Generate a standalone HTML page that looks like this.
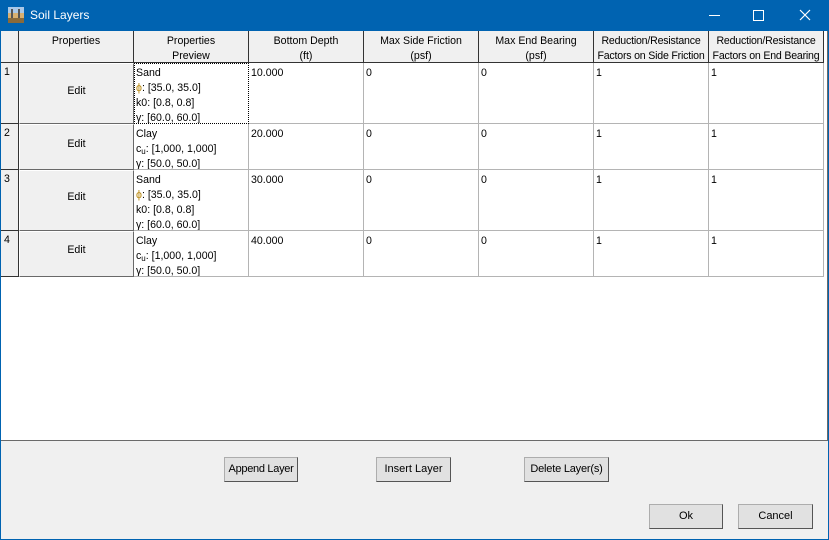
<!DOCTYPE html><html><head><style>
body{margin:0;width:829px;height:540px;overflow:hidden;background:#f0f0f0;font-family:"Liberation Sans",sans-serif;font-size:10.6px;color:#000;position:relative}
.a{position:absolute}
.tb{left:0;top:0;width:829px;height:31px;background:#0063b1;color:#fff}
.grid{left:1px;top:31px;width:826px;height:409px;background:#fff;border-right:1px solid #6a6a6a;border-bottom:1px solid #6a6a6a}
.h{background:#f0f0f0;border-right:1px solid #333;border-bottom:1px solid #333;text-align:center;line-height:15px;box-sizing:border-box;padding-top:3px;white-space:nowrap;overflow:hidden}
.c{border-right:1px solid #b4b4b4;border-bottom:1px solid #b4b4b4;box-sizing:border-box;padding:3px 2px;line-height:15px;white-space:nowrap;overflow:hidden}
.rh{background:#f0f0f0;border-right:1px solid #333;border-bottom:1px solid #333;box-sizing:border-box;padding:3px 3px}
.eb{background:#f0f0f0;border:1px solid #fff;border-right-color:#696969;border-bottom-color:#696969;box-sizing:border-box;text-align:center}
.btn{background:#e1e1e1;border:1px solid #adadad;border-right-color:#555;border-bottom-color:#555;box-sizing:border-box;text-align:center;font-size:11px}
.s{font-size:8px;vertical-align:baseline;position:relative;top:2px;line-height:0}
</style></head><body>
<div class="a" style="left:0;top:31px;width:1px;height:509px;background:#0063b1"></div>
<div class="a" style="right:0;top:31px;width:1px;height:509px;background:#0063b1"></div>
<div class="a" style="left:0;bottom:0;width:829px;height:1px;background:#0063b1"></div>
<div class="a tb">
<svg class="a" style="left:8px;top:7px" width="16" height="16"><rect width="16" height="16" fill="#d9b070"/><rect x="0" y="0" width="16" height="6" fill="#a9c8e8"/><rect x="3" y="2" width="2" height="13" fill="#555"/><rect x="10" y="2" width="2" height="13" fill="#555"/><rect x="0" y="11" width="16" height="5" fill="#8a6a3a"/></svg>
<div class="a" style="left:30px;top:8px;font-size:12px">Soil Layers</div>
<div class="a" style="left:709px;top:15px;width:11px;height:1px;background:#fff"></div>
<div class="a" style="left:753px;top:10px;width:9px;height:9px;border:1px solid #fff"></div>
<svg class="a" style="left:799px;top:9px" width="12" height="12"><path d="M1 1L11 11M11 1L1 11" stroke="#fff" stroke-width="1.2"/></svg>
</div>
<div class="a grid">
<div class="a h" style="left:0;top:0;width:18px;height:32px"></div>
<div class="a h" style="left:18px;top:0;width:115px;height:32px">Properties</div>
<div class="a h" style="left:133px;top:0;width:115px;height:32px">Properties<br>Preview</div>
<div class="a h" style="left:248px;top:0;width:115px;height:32px">Bottom Depth<br>(ft)</div>
<div class="a h" style="left:363px;top:0;width:115px;height:32px">Max Side Friction<br>(psf)</div>
<div class="a h" style="left:478px;top:0;width:115px;height:32px">Max End Bearing<br>(psf)</div>
<div class="a h" style="left:593px;top:0;width:115px;height:32px;letter-spacing:-0.2px">Reduction/Resistance<br>Factors on Side Friction</div>
<div class="a h" style="left:708px;top:0;width:115px;height:32px;letter-spacing:-0.2px">Reduction/Resistance<br>Factors on End Bearing</div>

<div class="a rh" style="left:0;top:32px;width:18px;height:61px">1</div>
<div class="a eb" style="left:18px;top:32px;width:115px;height:61px;line-height:55px">Edit</div>
<div class="a c" style="left:133px;top:32px;width:115px;height:61px;border:1px dotted #000;padding:2px 1px">Sand<br><span style="color:#b8860b">ϕ</span>: [35.0, 35.0]<br>k0: [0.8, 0.8]<br>γ: [60.0, 60.0]</div>
<div class="a c" style="left:248px;top:32px;width:115px;height:61px">10.000</div>
<div class="a c" style="left:363px;top:32px;width:115px;height:61px">0</div>
<div class="a c" style="left:478px;top:32px;width:115px;height:61px">0</div>
<div class="a c" style="left:593px;top:32px;width:115px;height:61px">1</div>
<div class="a c" style="left:708px;top:32px;width:115px;height:61px">1</div>

<div class="a rh" style="left:0;top:93px;width:18px;height:46px">2</div>
<div class="a eb" style="left:18px;top:93px;width:115px;height:46px;line-height:38px">Edit</div>
<div class="a c" style="left:133px;top:93px;width:115px;height:46px">Clay<br>c<span class="s">u</span>: [1,000, 1,000]<br>γ: [50.0, 50.0]</div>
<div class="a c" style="left:248px;top:93px;width:115px;height:46px">20.000</div>
<div class="a c" style="left:363px;top:93px;width:115px;height:46px">0</div>
<div class="a c" style="left:478px;top:93px;width:115px;height:46px">0</div>
<div class="a c" style="left:593px;top:93px;width:115px;height:46px">1</div>
<div class="a c" style="left:708px;top:93px;width:115px;height:46px">1</div>

<div class="a rh" style="left:0;top:139px;width:18px;height:61px">3</div>
<div class="a eb" style="left:18px;top:139px;width:115px;height:61px;line-height:53px">Edit</div>
<div class="a c" style="left:133px;top:139px;width:115px;height:61px">Sand<br><span style="color:#b8860b">ϕ</span>: [35.0, 35.0]<br>k0: [0.8, 0.8]<br>γ: [60.0, 60.0]</div>
<div class="a c" style="left:248px;top:139px;width:115px;height:61px">30.000</div>
<div class="a c" style="left:363px;top:139px;width:115px;height:61px">0</div>
<div class="a c" style="left:478px;top:139px;width:115px;height:61px">0</div>
<div class="a c" style="left:593px;top:139px;width:115px;height:61px">1</div>
<div class="a c" style="left:708px;top:139px;width:115px;height:61px">1</div>

<div class="a rh" style="left:0;top:200px;width:18px;height:46px">4</div>
<div class="a eb" style="left:18px;top:200px;width:115px;height:46px;line-height:36px">Edit</div>
<div class="a c" style="left:133px;top:200px;width:115px;height:46px">Clay<br>c<span class="s">u</span>: [1,000, 1,000]<br>γ: [50.0, 50.0]</div>
<div class="a c" style="left:248px;top:200px;width:115px;height:46px">40.000</div>
<div class="a c" style="left:363px;top:200px;width:115px;height:46px">0</div>
<div class="a c" style="left:478px;top:200px;width:115px;height:46px">0</div>
<div class="a c" style="left:593px;top:200px;width:115px;height:46px">1</div>
<div class="a c" style="left:708px;top:200px;width:115px;height:46px">1</div>
</div>

<div class="a btn" style="left:224px;top:457px;width:74px;height:25px;line-height:23px;letter-spacing:-0.3px">Append Layer</div>
<div class="a btn" style="left:376px;top:457px;width:75px;height:25px;line-height:23px">Insert Layer</div>
<div class="a btn" style="left:524px;top:457px;width:85px;height:25px;line-height:23px;letter-spacing:-0.2px">Delete Layer(s)</div>
<div class="a btn" style="left:649px;top:504px;width:74px;height:25px;line-height:23px">Ok</div>
<div class="a btn" style="left:738px;top:504px;width:75px;height:25px;line-height:23px">Cancel</div>
</body></html>
